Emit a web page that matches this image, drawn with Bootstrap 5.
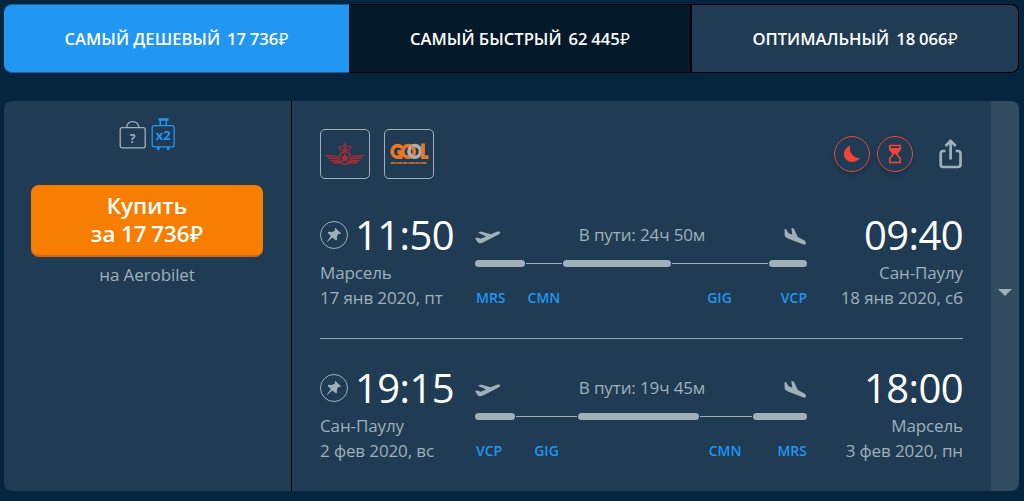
<!DOCTYPE html>
<html lang="ru">
<head>
<meta charset="utf-8">
<meta name="viewport" content="width=device-width, initial-scale=1">
<title>Авиабилеты</title>
<link href="https://cdn.jsdelivr.net/npm/bootstrap@5.3.0/dist/css/bootstrap.min.css" rel="stylesheet">
<style>
body{background:#04253d;color:#a0b0b9;font-family:"Open Sans","Noto Sans",sans-serif;font-size:17px;line-height:25px;height:501px;overflow:hidden}
.page-wrap{padding:4px 5px 0 4px}
.sort-tabs{height:69px;margin-bottom:28px}
.sort-tab{border:1px solid #000;border-left-width:0;border-radius:0;background:#1f3c54;color:#fff;font-weight:600;font-size:16.6px;gap:7px;padding:2px 0 0}
.sort-tab:hover{color:#fff}
.tab-cheap{width:346px;background:#2196f3;border-color:#14609d;border-right-color:#000;border-radius:8px 0 0 8px}
.tab-fast{width:342px;background:#041a2b;border-right-width:2px}
.tab-best{border-radius:0 8px 8px 0}
.thin-gap{margin-left:1px}
.rub{font-weight:400;margin-left:.5px}
.ticket{height:390px;background:#1f3c54;border-radius:8px;overflow:hidden}
.buy-col{width:288px;flex:none;border-right:1px solid #000;padding:17px 28px 0 27px}
.buy-btn{height:72px;width:232px;background:#f77e00;border:0;border-bottom:2px solid #d5640c;border-radius:8px;color:#fff;font-size:22.3px;font-weight:600;line-height:28px;padding:7px 0 0;margin-top:34px}
.buy-btn .rub{font-weight:500}
.seller{margin-top:5px;letter-spacing:-.1px}
.info-col{padding:28px 28px 0}
.carrier{width:50px;height:50px;border:1.4px solid #a0b0b9;border-radius:5px}
.warn{width:36px;height:36px;border:1.4px solid #f44336;border-radius:50%;box-shadow:0 2px 5px #0003}
.leg{height:100px}
.leg-side{width:155px}
.leg-side.text-end{width:156px}
.clock-row{height:48px;gap:7px}
.clock{font-size:40px;line-height:48px;color:#fff;letter-spacing:-.6px}
.pin{width:28px;height:28px;border:1.3px solid #a0b0b9;border-radius:50%}
.place{margin-top:1px;white-space:nowrap;letter-spacing:-.12px}
.route{width:332px}
.route-head{height:48px}
.duration{margin-top:-1px;letter-spacing:-.12px}
.track{height:8px;gap:1px}
.flight-bar{height:7px;border-radius:4px;background:#a0b0b9}
.stop-line{height:1px;background:#a0b0b9}
.codes{margin-top:18px;padding-left:1px;color:#2196f3;font-size:14px;font-weight:600;line-height:25px}
.leg-divider{height:1px;background:#96a6b0;margin:27px 0 25px}
.expand{width:28px;flex:none;background:#314c61;padding-bottom:7px}
svg{display:block;flex:none}
</style>
</head>
<body>
<svg width="0" height="0" class="d-none">
  <symbol id="takeoff" viewBox="0 0 26 16"><path d="M0 9.200L2.200 8.400L5.600 9.800L11.200 7.600L3 3.800L5.800 2.500L15.800 5.200L21.800 2.700C24.800 1.600 26.300 3.700 24 5.300L8.500 13.300C6 14.600 3.800 14.600 2.400 12.700Z"/></symbol>
  <symbol id="landing" viewBox="0 0 24 20"><path d="M1.600 2L3.200 2.300L5.300 6L9.300 7.800L8.300 1L10.800 1.400L14.800 9.900L21 13.300C24 15 23.300 18.200 20.600 17.600L5 11.400C2.500 10.300 1.600 9.500 1.600 7.500Z"/></symbol>
  <symbol id="pushpin" viewBox="0 0 16 16"><path d="M9.200 .8L15.200 6.400L13.600 7.100L12.300 6.900L10.900 9.500L11 13L9.700 13.300L6.400 10.500L1.100 15L.8 14.700L4.900 9L1.800 6L2.200 4.700L6 4.900L9 3.400L8.700 2Z"/></symbol>
</svg>
<main class="page-wrap">
  <div class="sort-tabs d-flex">
    <button class="btn sort-tab tab-cheap d-flex align-items-center justify-content-center"><span>САМЫЙ ДЕШЕВЫЙ</span><span>17&#8201;<span class="thin-gap">736</span><span class="rub">₽</span></span></button>
    <button class="btn sort-tab tab-fast d-flex align-items-center justify-content-center"><span>САМЫЙ БЫСТРЫЙ</span><span>62&#8201;<span class="thin-gap">445</span><span class="rub">₽</span></span></button>
    <button class="btn sort-tab tab-best d-flex align-items-center justify-content-center flex-fill"><span>ОПТИМАЛЬНЫЙ</span><span>18&#8201;<span class="thin-gap">066</span><span class="rub">₽</span></span></button>
  </div>

  <article class="ticket d-flex">
    <section class="buy-col d-flex flex-column align-items-center">
      <div class="d-flex gap-1">
        <svg width="28" height="33" viewBox="0 0 28 33" fill="none" stroke="#a0b0b9" stroke-width="1.3"><rect x="1.2" y="9.7" width="25" height="20.2" rx="2"/><path d="M7.5 9.5C8 6 10.5 3.7 13.7 3.700S19.4 6 19.900 9.500"/><text x="13.7" y="24.500" text-anchor="middle" font-size="12" font-weight="700" fill="#a0b0b9" stroke="none">?</text></svg>
        <svg width="25" height="33" viewBox="0 0 25 33" fill="none" stroke="#2196f3" stroke-width="1.3"><rect x="1.2" y="7.7" width="22" height="21.2" rx="2"/><path d="M9.300 7.700V2M15.300 7.700V2" stroke-width="1.5"/><path d="M7.500 1.500H17.500" stroke-width="2.600"/><path d="M7.300 29V32M17.300 29V32" stroke-width="2.6"/><text x="12.200" y="22.300" text-anchor="middle" font-size="13" font-weight="700" fill="#2196f3" stroke="none">x2</text></svg>
      </div>
      <button class="btn buy-btn d-flex flex-column align-items-center"><span>Купить</span><span>за 17&#8201;<span class="thin-gap">736</span><span class="rub">₽</span></span></button>
      <div class="seller">на Aerobilet</div>
    </section>

    <section class="info-col flex-fill">
      <div class="d-flex align-items-center">
        <div class="carrier d-flex align-items-center justify-content-center">
          <svg width="40" height="24" viewBox="0 0 40 24" fill="none" stroke="#ae2b36"><path d="M.5 13.500L13 14.500M3 16L14 16.800M5.500 18.500L15 19M8 20.800H15M39.500 13.500L27 14.500M37 16L26 16.800M34.500 18.500L25 19M32 20.800H25" stroke-width="1.500"/><ellipse cx="20" cy="16" rx="5.800" ry="6.300" stroke-width="1.500"/><path d="M20 11l1.300 3.400 3.700.2-2.900 2.300 1 3.600-3.100-2-3.100 2 1-3.600-2.900-2.300 3.700-.2z" fill="#ae2b36" stroke="none"/><path d="M13.800 5L18 4.500L20 1.500L22 4.500L26.200 5L24 8.500H16Z" stroke-width="1.200"/><path d="M20 3v6M17.500 6.500h5" stroke-width="1.200"/></svg>
        </div>
        <div class="carrier d-flex align-items-center justify-content-center" style="margin-left:13.5px">
          <svg width="40" height="24" viewBox="0 0 40 24" fill="none" stroke="#ee7523" stroke-width="3.800"><path d="M13 5.600C11.700 4.200 10.500 3.600 9 3.600A5.800 5.800 0 0 0 9 15.200H11.700V10H8.500"/><circle cx="19.500" cy="9.400" r="5.800"/><circle cx="25.800" cy="9.400" r="5.800" stroke="#a9b0b7"/><path d="M22.300 4.500A5.800 5.800 0 0 1 24.500 13" stroke-width="2.500"/><path d="M34 1.500V15.200H39.500"/><path d="M2 21H38" stroke-width="1.800" stroke-dasharray="4 .4 1.500 .5 5 .5" opacity=".75"/></svg>
        </div>
        <div class="warn d-flex align-items-center justify-content-center ms-auto">
          <svg width="18" height="18" viewBox="0 0 18 18"><path d="M7.300 .8C5.700 6.500 9.500 12.500 17 13.200C11.500 19.500 1 17.500 1 9C1 5 3.500 2 7.300 .8Z" fill="#f44336"/></svg>
        </div>
        <div class="warn d-flex align-items-center justify-content-center" style="margin-left:7px">
          <svg width="14" height="20" viewBox="0 0 14 20"><path d="M1.700 1.500H12.300V5.500L8.500 10L12.300 14.500V18.500H1.700V14.500L5.500 10L1.700 5.500Z" fill="none" stroke="#f44336" stroke-width="1.6"/><path d="M2 4H12V6L8 10H6L2 6Z" fill="#f44336"/></svg>
        </div>
        <svg style="margin-left:25px" width="25" height="32" viewBox="0 0 25 32" fill="none" stroke="#a0b0b9" stroke-width="2.7"><path d="M7.500 13H5.200Q2.700 13 2.700 15.500V26.500Q2.700 29 5.200 29H20Q22.500 29 22.500 26.500V15.500Q22.500 13 20 13H17.700"/><path d="M12.600 21.500V3.500M7.500 8L12.600 3L17.700 8"/></svg>
      </div>

      <div class="leg d-flex" style="margin-top:32px">
        <div class="leg-side">
          <div class="clock-row d-flex align-items-center"><span class="pin d-flex align-items-center justify-content-center"><svg width="16" height="16" fill="#a0b0b9"><use href="#pushpin"/></svg></span><span class="clock">11:50</span></div>
          <div class="place">Марсель<br>17 янв 2020, пт</div>
        </div>
        <div class="route">
          <div class="route-head d-flex align-items-center justify-content-between">
            <svg class="mt-1" width="26" height="16" fill="#a0b0b9"><use href="#takeoff"/></svg>
            <span class="duration">В пути: 24ч 50м</span>
            <svg class="mt-1" width="24" height="20" fill="#a0b0b9"><use href="#landing"/></svg>
          </div>
          <div class="track d-flex align-items-center"><i class="flight-bar" style="width:50px"></i><i class="stop-line" style="width:36px"></i><i class="flight-bar" style="width:108px"></i><i class="stop-line" style="width:96px"></i><i class="flight-bar" style="width:38px"></i></div>
          <div class="codes d-flex"><span>MRS</span><span style="margin-left:22px">CMN</span><span class="ms-auto">GIG</span><span style="margin-left:49px">VCP</span></div>
        </div>
        <div class="leg-side text-end"><div class="clock">09:40</div><div class="place">Сан-Паулу<br>18 янв 2020, сб</div></div>
      </div>

      <div class="leg-divider"></div>

      <div class="leg d-flex">
        <div class="leg-side">
          <div class="clock-row d-flex align-items-center"><span class="pin d-flex align-items-center justify-content-center"><svg width="16" height="16" fill="#a0b0b9"><use href="#pushpin"/></svg></span><span class="clock">19:15</span></div>
          <div class="place">Сан-Паулу<br>2 фев 2020, вс</div>
        </div>
        <div class="route">
          <div class="route-head d-flex align-items-center justify-content-between">
            <svg class="mt-1" width="26" height="16" fill="#a0b0b9"><use href="#takeoff"/></svg>
            <span class="duration">В пути: 19ч 45м</span>
            <svg class="mt-1" width="24" height="20" fill="#a0b0b9"><use href="#landing"/></svg>
          </div>
          <div class="track d-flex align-items-center"><i class="flight-bar" style="width:40px"></i><i class="stop-line" style="width:61px"></i><i class="flight-bar" style="width:121px"></i><i class="stop-line" style="width:52px"></i><i class="flight-bar" style="width:54px"></i></div>
          <div class="codes d-flex"><span>VCP</span><span style="margin-left:32px">GIG</span><span class="ms-auto">CMN</span><span style="margin-left:36px">MRS</span></div>
        </div>
        <div class="leg-side text-end"><div class="clock">18:00</div><div class="place">Марсель<br>3 фев 2020, пн</div></div>
      </div>
    </section>

    <aside class="expand d-flex align-items-center justify-content-center">
      <svg width="14" height="8" viewBox="0 0 14 8"><path d="M0 0H14L7 7Z" fill="#a0b0b9"/></svg>
    </aside>
  </article>
</main>
<script src="https://cdn.jsdelivr.net/npm/bootstrap@5.3.0/dist/js/bootstrap.bundle.min.js"></script>
</body>
</html>
